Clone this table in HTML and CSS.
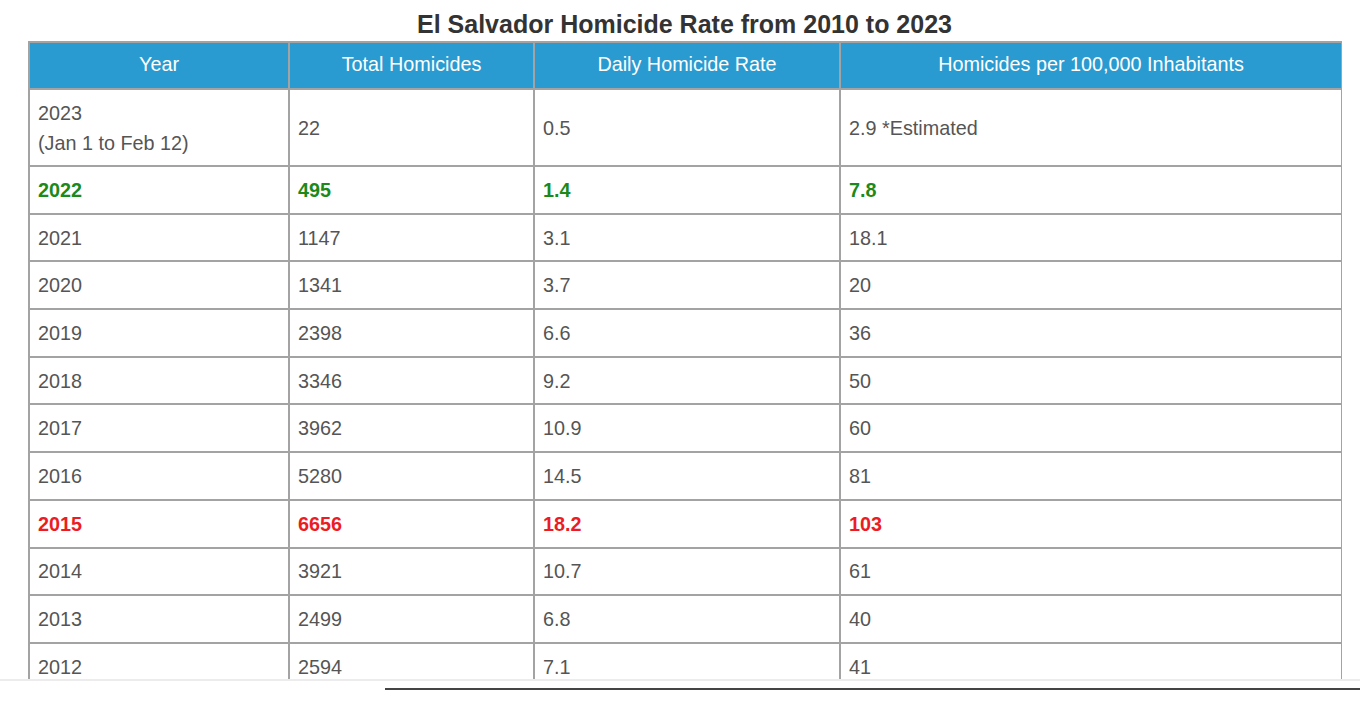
FILE: index.html
```html
<!DOCTYPE html>
<html>
<head>
<meta charset="utf-8">
<link rel="stylesheet" href="styles.css">
</head>
<body>
<div class="page">
  <h2 class="title">El Salvador Homicide Rate from 2010 to 2023</h2>
  <div class="clip">
    <table class="rates">
      <colgroup>
        <col class="c1"><col class="c2"><col class="c3"><col class="c4">
      </colgroup>
      <thead>
        <tr><th>Year</th><th>Total Homicides</th><th>Daily Homicide Rate</th><th>Homicides per 100,000 Inhabitants</th></tr>
      </thead>
      <tbody>
        <tr class="tall"><td>2023<br>(Jan 1 to Feb 12)</td><td>22</td><td>0.5</td><td>2.9 *Estimated</td></tr>
        <tr class="green"><td>2022</td><td>495</td><td>1.4</td><td>7.8</td></tr>
        <tr><td>2021</td><td>1147</td><td>3.1</td><td>18.1</td></tr>
        <tr><td>2020</td><td>1341</td><td>3.7</td><td>20</td></tr>
        <tr><td>2019</td><td>2398</td><td>6.6</td><td>36</td></tr>
        <tr><td>2018</td><td>3346</td><td>9.2</td><td>50</td></tr>
        <tr><td>2017</td><td>3962</td><td>10.9</td><td>60</td></tr>
        <tr><td>2016</td><td>5280</td><td>14.5</td><td>81</td></tr>
        <tr class="red"><td>2015</td><td>6656</td><td>18.2</td><td>103</td></tr>
        <tr><td>2014</td><td>3921</td><td>10.7</td><td>61</td></tr>
        <tr><td>2013</td><td>2499</td><td>6.8</td><td>40</td></tr>
        <tr><td>2012</td><td>2594</td><td>7.1</td><td>41</td></tr>
      </tbody>
    </table>
  </div>
  <div class="fade-line"></div>
  <div class="rule-row"><div class="rule"></div></div>
</div>
</body>
</html>
```

FILE: styles.css
```css
html, body {
  margin: 0;
  padding: 0;
  background: #ffffff;
}

body {
  font-family: "Liberation Sans", Arial, sans-serif;
  color: #555555;
}

.page {
  width: 1360px;
}

.title {
  margin: 0 0 0 28px;
  width: 1313px;
  padding-top: 8px;
  height: 33px;
  line-height: 33px;
  font-size: 25px;
  font-weight: bold;
  color: #333333;
  text-align: center;
}

.clip {
  margin-left: 27px;
  padding: 0 1px;
  width: 1313px;
  height: 638px;
  overflow: hidden;
}

.rates {
  width: 1313px;
  border-collapse: collapse;
  table-layout: fixed;
  font-size: 19.8px;
}

.c1 { width: 260px; }
.c2 { width: 245px; }
.c3 { width: 306px; }
.c4 { width: 502px; }

.rates th,
.rates td {
  border: 2px solid #a3a3a3;
  line-height: 30px;
  padding: 0 8px;
  vertical-align: middle;
}

.rates th {
  background: #2a9bd0;
  color: #ffffff;
  font-weight: normal;
  text-align: center;
  height: 42px;
  padding: 0 8px 3px;
}

.rates td {
  text-align: left;
  height: 45.7px;
}

.rates tr.tall td {
  height: 75px;
}

.rates tr.green td {
  color: #1b8a1b;
  font-weight: bold;
}

.rates tr.red td {
  color: #ec1c24;
  font-weight: bold;
}

.fade-line {
  height: 2px;
  background: #ececec;
}

.rule-row {
  display: flex;
  justify-content: flex-end;
  padding-top: 7px;
}

.rule {
  width: 975px;
  height: 2px;
  background: #444444;
}
```
